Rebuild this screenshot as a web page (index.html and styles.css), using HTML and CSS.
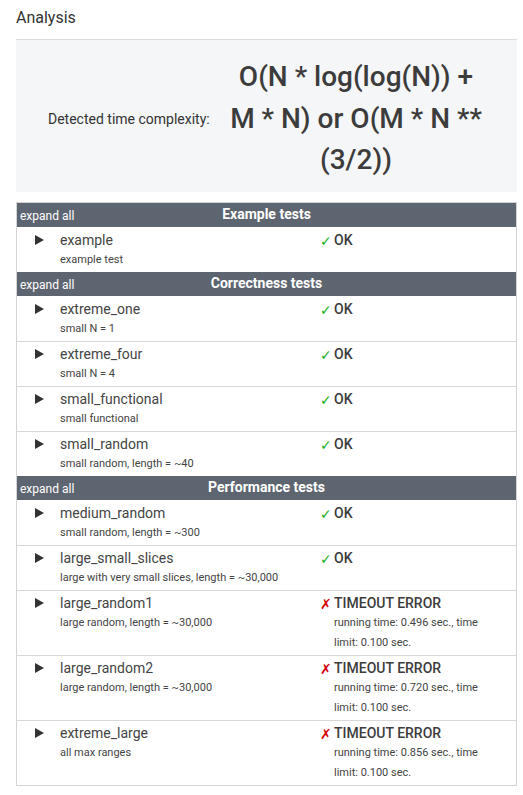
FILE: index.html
```html
<!DOCTYPE html>
<html>
<head>
<meta charset="utf-8">
<link rel="stylesheet" href="styles.css">
</head>
<body>
<div class="page">
  <h2 class="title">Analysis</h2>
  <div class="complexity">
    <div class="label">Detected time complexity:</div>
    <div class="value">O(N * log(log(N)) + M * N) or O(M * N ** (3/2))</div>
  </div>

  <div class="tests">
    <div class="group-head"><span class="expand">expand all</span><span class="group-title">Example tests</span><span></span></div>
    <div class="row">
      <div class="arrow"><span class="tri"></span></div>
      <div class="name"><div class="tname">example</div><div class="tdesc">example test</div></div>
      <div class="result ok"><span class="icon">✓</span><div><div class="status">OK</div></div></div>
    </div>

    <div class="group-head"><span class="expand">expand all</span><span class="group-title">Correctness tests</span><span></span></div>
    <div class="row">
      <div class="arrow"><span class="tri"></span></div>
      <div class="name"><div class="tname">extreme_one</div><div class="tdesc">small N = 1</div></div>
      <div class="result ok"><span class="icon">✓</span><div><div class="status">OK</div></div></div>
    </div>
    <div class="row">
      <div class="arrow"><span class="tri"></span></div>
      <div class="name"><div class="tname">extreme_four</div><div class="tdesc">small N = 4</div></div>
      <div class="result ok"><span class="icon">✓</span><div><div class="status">OK</div></div></div>
    </div>
    <div class="row">
      <div class="arrow"><span class="tri"></span></div>
      <div class="name"><div class="tname">small_functional</div><div class="tdesc">small functional</div></div>
      <div class="result ok"><span class="icon">✓</span><div><div class="status">OK</div></div></div>
    </div>
    <div class="row">
      <div class="arrow"><span class="tri"></span></div>
      <div class="name"><div class="tname">small_random</div><div class="tdesc">small random, length = ~40</div></div>
      <div class="result ok"><span class="icon">✓</span><div><div class="status">OK</div></div></div>
    </div>

    <div class="group-head"><span class="expand">expand all</span><span class="group-title">Performance tests</span><span></span></div>
    <div class="row">
      <div class="arrow"><span class="tri"></span></div>
      <div class="name"><div class="tname">medium_random</div><div class="tdesc">small random, length = ~300</div></div>
      <div class="result ok"><span class="icon">✓</span><div><div class="status">OK</div></div></div>
    </div>
    <div class="row">
      <div class="arrow"><span class="tri"></span></div>
      <div class="name"><div class="tname">large_small_slices</div><div class="tdesc">large with very small slices, length = ~30,000</div></div>
      <div class="result ok"><span class="icon">✓</span><div><div class="status">OK</div></div></div>
    </div>
    <div class="row">
      <div class="arrow"><span class="tri"></span></div>
      <div class="name"><div class="tname">large_random1</div><div class="tdesc">large random, length = ~30,000</div></div>
      <div class="result err"><span class="icon">✗</span><div><div class="status">TIMEOUT ERROR</div><div class="detail">running time: 0.496 sec., time limit: 0.100 sec.</div></div></div>
    </div>
    <div class="row">
      <div class="arrow"><span class="tri"></span></div>
      <div class="name"><div class="tname">large_random2</div><div class="tdesc">large random, length = ~30,000</div></div>
      <div class="result err"><span class="icon">✗</span><div><div class="status">TIMEOUT ERROR</div><div class="detail">running time: 0.720 sec., time limit: 0.100 sec.</div></div></div>
    </div>
    <div class="row">
      <div class="arrow"><span class="tri"></span></div>
      <div class="name"><div class="tname">extreme_large</div><div class="tdesc">all max ranges</div></div>
      <div class="result err"><span class="icon">✗</span><div><div class="status">TIMEOUT ERROR</div><div class="detail">running time: 0.856 sec., time limit: 0.100 sec.</div></div></div>
    </div>
  </div>
</div>
</body>
</html>
```

FILE: styles.css
```css
* { box-sizing: border-box; }
html, body { margin: 0; padding: 0; background: #fff; }
body {
  font-family: Roboto, "Liberation Sans", Arial, sans-serif;
  color: #3a3a3a;
}
.page {
  padding: 8px 6px 0 16px;
}
.title {
  margin: 0;
  font-size: 16px;
  font-weight: 400;
  line-height: 19px;
  color: #333;
  height: 31px;
}
.complexity {
  display: flex;
  align-items: center;
  background: #f5f6f8;
  border-top: 1px solid #dcdcdc;
  padding: 15px 0 10px 32px;
  height: 153px;
}
.label {
  font-size: 14px;
  color: #333;
  width: 178px;
  flex: none;
}
.value {
  width: 260px;
  text-align: center;
  font-size: 28px;
  font-weight: 500;
  line-height: 41.5px;
  color: #3c3c3c;
  flex: none;
}
.tests {
  margin-top: 10px;
  border: 1px solid #d4d4d4;
}
.group-head {
  display: grid;
  grid-template-columns: 1fr auto 1fr;
  align-items: center;
  height: 24px;
  background: #5d6570;
  color: #fff;
}
.expand {
  font-size: 12px;
  padding-left: 3px;
  padding-top: 2px;
}
.group-title {
  font-size: 14px;
  font-weight: 700;
  padding-bottom: 2px;
}
.row {
  display: grid;
  grid-template-columns: 43px 260px 1fr;
  padding: 3px 0 2px;
}
.row + .row {
  border-top: 1px solid #d8d8d8;
  padding-top: 2px;
}
.arrow {
  padding-left: 18px;
  height: 20px;
  display: flex;
  align-items: center;
}
.tri {
  width: 0;
  height: 0;
  border-top: 5px solid transparent;
  border-bottom: 5px solid transparent;
  border-left: 9px solid #333;
}
.tname {
  font-size: 14px;
  line-height: 20px;
  color: #444;
}
.tdesc {
  font-size: 11px;
  line-height: 20px;
  color: #444;
}
.result {
  display: flex;
  padding-right: 20px;
}
.icon {
  width: 14px;
  flex: none;
  font-family: "DejaVu Sans", sans-serif;
  font-size: 14px;
  line-height: 23px;
}
.ok .icon { color: #22b022; }
.err .icon { color: #d40000; }
.status {
  font-size: 14px;
  font-weight: 500;
  line-height: 20px;
  color: #3c3c3c;
}
.detail {
  font-size: 11px;
  line-height: 20px;
  color: #444;
}
```
